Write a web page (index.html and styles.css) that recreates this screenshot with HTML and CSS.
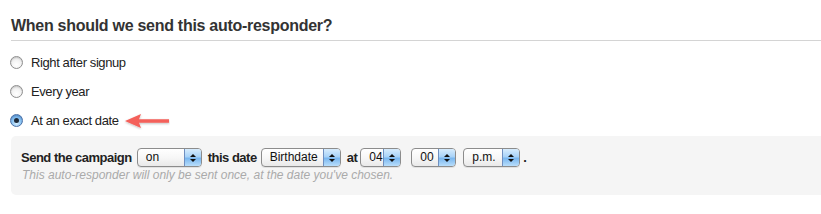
FILE: index.html
```html
<!DOCTYPE html>
<html>
<head>
<meta charset="utf-8">
<link rel="stylesheet" href="styles.css">
</head>
<body>
<div class="page">
  <h2 class="title">When should we send this auto-responder?</h2>
  <div class="options">
    <label class="opt"><span class="radio"></span>Right after signup</label>
    <label class="opt"><span class="radio"></span>Every year</label>
    <label class="opt"><span class="radio checked"></span>At an exact date
      <svg class="arrow" width="46" height="18" viewBox="0 0 46 18">
        <defs>
          <filter id="sh" x="-20%" y="-40%" width="140%" height="180%">
            <feDropShadow dx="0" dy="1" stdDeviation="0.8" flood-color="#000" flood-opacity="0.25"/>
          </filter>
        </defs>
        <g filter="url(#sh)" fill="#f4605a">
          <path d="M1 9 L17 2 L15 7.3 L45 7.3 L45 10.7 L15 10.7 L17 16 Z"/>
        </g>
      </svg>
    </label>
  </div>
  <div class="box">
    <div class="row">
      <span class="lbl">Send the campaign</span>
      <span class="sel w-on"><span class="val">on</span><span class="btn"><i class="up"></i><i class="dn"></i></span></span>
      <span class="lbl">this date</span>
      <span class="sel w-bd"><span class="val">Birthdate</span><span class="btn"><i class="up"></i><i class="dn"></i></span></span>
      <span class="lbl">at</span>
      <span class="sel w-hr"><span class="val">04</span><span class="btn"><i class="up"></i><i class="dn"></i></span></span>
      <span class="sel w-mn"><span class="val">00</span><span class="btn"><i class="up"></i><i class="dn"></i></span></span>
      <span class="sel w-pm"><span class="val">p.m.</span><span class="btn"><i class="up"></i><i class="dn"></i></span></span>
      <span class="lbl dot">.</span>
    </div>
    <p class="hint">This auto-responder will only be sent once, at the date you've chosen.</p>
  </div>
</div>
</body>
</html>
```
FILE: styles.css
```css
html, body {
  margin: 0;
  padding: 0;
  background: #fff;
}
body {
  font-family: "Liberation Sans", Arial, sans-serif;
  color: #222;
  width: 821px;
  height: 214px;
  overflow: hidden;
}
.page {
  padding-left: 11px;
  padding-top: 16px;
}
.title {
  margin: 0;
  font-size: 16px;
  letter-spacing: -0.28px;
  line-height: 20px;
  font-weight: bold;
  color: #333;
  padding-bottom: 4px;
  border-bottom: 1px solid #d4d4d4;
}
.options {
  margin-top: 7px;
}
.opt {
  display: flex;
  align-items: center;
  height: 29px;
  font-size: 13px;
  letter-spacing: -0.4px;
  color: #222;
}
.radio {
  box-sizing: border-box;
  width: 13px;
  height: 13px;
  border-radius: 50%;
  border: 1px solid #8e8e8e;
  background: radial-gradient(circle at 50% 70%, #ffffff 0%, #f4f4f4 45%, #d6d6d6 100%);
  box-shadow: inset 0 1px 1px rgba(0,0,0,0.12);
  margin-left: -1px;
  margin-right: 8px;
  display: flex;
  align-items: center;
  justify-content: center;
}
.radio.checked {
  border-color: #4a6fa6;
  background: radial-gradient(circle at 50% 75%, #d8efff 0%, #8cc4f2 45%, #4f8fd6 100%);
}
.radio.checked::after {
  content: "";
  width: 5px;
  height: 5px;
  border-radius: 50%;
  background: #1e2a3a;
}
.arrow {
  margin-left: 5px;
  margin-top: 1px;
}
.box {
  margin-top: 1px;
  background: #f5f5f5;
  border-radius: 5px 0 0 5px;
  padding: 12px 0 12px 10px;
}
.row {
  display: flex;
  align-items: center;
  height: 19px;
}
.lbl {
  font-size: 13px;
  letter-spacing: -0.5px;
  font-weight: bold;
  color: #222;
}
.sel {
  box-sizing: border-box;
  height: 19px;
  border: 1px solid #8c8c8c;
  border-radius: 4px;
  background: linear-gradient(#ffffff 0%, #f7f7f7 50%, #e9e9e9 100%);
  display: flex;
  align-items: stretch;
  overflow: hidden;
  box-shadow: 0 1px 0 rgba(0,0,0,0.08);
  font-size: 12px;
  color: #111;
}
.val {
  flex: 1;
  padding-left: 8px;
  line-height: 17px;
}
.btn {
  width: 16px;
  border-left: 1px solid #6f8fc0;
  background: linear-gradient(#d7ecfd 0%, #a9d3f8 45%, #7ab7ef 55%, #b9defb 100%);
  display: flex;
  flex-direction: column;
  align-items: center;
  justify-content: center;
  gap: 2px;
}
.btn i {
  display: block;
  width: 0;
  height: 0;
  border-left: 3px solid transparent;
  border-right: 3px solid transparent;
}
.btn .up { border-bottom: 3px solid #111; }
.btn .dn { border-top: 3px solid #111; }
.w-on { width: 65px; margin: 0 6px 0 5px; }
.w-bd { width: 80px; margin: 0 6px 0 4px; }
.w-hr { width: 41px; margin: 0 10px 0 3px; }
.w-mn { width: 45px; margin-right: 7px; }
.w-pm { width: 57px; margin-right: 3px; }
.hint {
  margin: 1px 0 0 1px;
  font-size: 12px;
  line-height: 15px;
  font-style: italic;
  color: #aaa;
}
```
